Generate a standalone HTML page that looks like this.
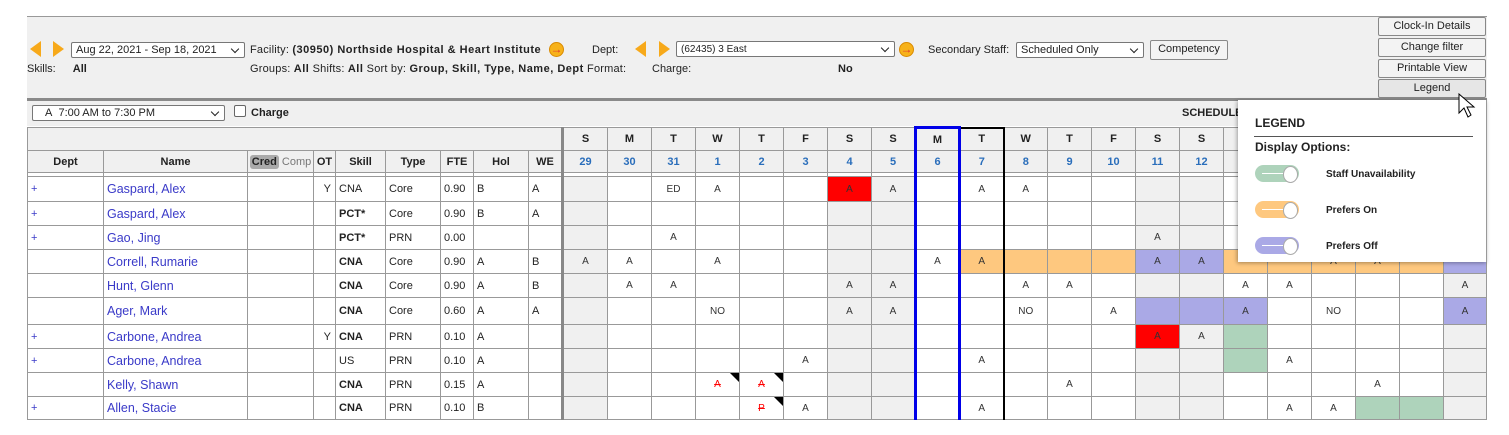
<!DOCTYPE html>
<html><head><meta charset="utf-8"><style>
*{box-sizing:border-box}
body{margin:0;width:1509px;height:435px;background:#fff;font-family:"Liberation Sans",sans-serif;font-size:11px;color:#222;position:relative;overflow:hidden}
.abs{position:absolute;white-space:nowrap}
.panel{position:absolute;left:27px;top:16px;width:1460px;height:83px;background:#f0f0f0;border-top:1px solid #999}
.bar{position:absolute;left:27px;top:98px;width:1460px;height:3px;background:#8a8a8a}
.panel2{position:absolute;left:27px;top:101px;width:1460px;height:25px;background:#f0f0f0}
.sel{position:absolute;background:#fff;border:1px solid #777;border-radius:2px;height:16px;font-size:11px;padding:1px 4px;line-height:13px}
.sel:after{content:"";position:absolute;right:6px;top:3px;width:5px;height:5px;border-right:1.5px solid #222;border-bottom:1.5px solid #222;transform:rotate(45deg)}
.btn{position:absolute;background:#f3f3f3;border:1px solid #888;border-radius:2px;font-size:11px;text-align:center;line-height:17px}
.tri{position:absolute;width:0;height:0}
.go{position:absolute;width:15px;height:15px;border-radius:50%;background:#f7b21a;border:1px solid #d98a00;color:#d33;font-size:12px;line-height:12px;text-align:center;font-weight:bold}
.hb b{letter-spacing:0.5px}
table{position:absolute;left:27px;top:126px;border-collapse:collapse;table-layout:fixed}
td{border:1px solid #999;padding:0 3px;font-size:11px;overflow:hidden;white-space:nowrap}
.h td{background:#f0f0f0;font-weight:bold;text-align:center;height:23px}
.h2 td{height:22px}
.num{color:#2a6ebb}
.gap td{height:4px;background:#fff;padding:0}
.r td.d{text-align:center;font-size:10px;color:#333}
.nm{color:#3a3ac8;font-family:"Liberation Sans Narrow","Liberation Sans",sans-serif;font-size:12.5px}
.pl{color:#3a3ac8}
.w{background:#f0f0f0}.o{background:#fec87f}.p{background:#aaa9e6}.rd{background:#f00}.g{background:#aed3bb}
.bl{border-left:3px solid #0000e8!important;border-right:3px solid #0000e8!important}
.bk{border-right:2px solid #000!important}
.th{position:relative}
.th:after{content:"";position:absolute;right:0;top:0;border-top:9px solid #000;border-left:9px solid transparent}
.rs{color:#f00;text-decoration:line-through}
.b{font-weight:bold}
.leg{position:absolute;left:1238px;top:100px;width:249px;height:162px;background:#fff;box-shadow:-1px 1px 4px rgba(0,0,0,.35);border-right:1px solid #999}
.tog{position:absolute;width:44px;height:17px;border-radius:9px}
.tog:before{content:"";position:absolute;left:7px;top:8px;width:24px;height:1px;background:#fff}
.tog:after{content:"";position:absolute;right:1px;top:1px;width:13px;height:15px;border-radius:50%;background:#fff;border:1px solid #aaa}
.ll{position:absolute;left:88px;font-weight:bold;font-size:10px}
</style></head><body>
<div class="panel"></div>
<div class="bar"></div>
<div class="panel2"></div>

<div class="tri" style="left:30px;top:41px;border-right:11px solid #f7a91a;border-top:8px solid transparent;border-bottom:8px solid transparent"></div>
<div class="tri" style="left:53px;top:41px;border-left:11px solid #f7a91a;border-top:8px solid transparent;border-bottom:8px solid transparent"></div>
<div class="sel" style="left:71px;top:42px;width:174px">Aug 22, 2021 - Sep 18, 2021</div>
<div class="abs hb" style="left:250px;top:44px;letter-spacing:0.2px">Facility: <b>(30950) Northside Hospital &amp; Heart Institute</b></div>
<div class="go" style="left:549px;top:42px">→</div>
<div class="abs" style="left:592px;top:44px">Dept:</div>
<div class="tri" style="left:635px;top:41px;border-right:11px solid #f7a91a;border-top:8px solid transparent;border-bottom:8px solid transparent"></div>
<div class="tri" style="left:659px;top:41px;border-left:11px solid #f7a91a;border-top:8px solid transparent;border-bottom:8px solid transparent"></div>
<div class="sel" style="left:676px;top:41px;width:219px;font-size:10px">(62435) 3 East</div>
<div class="go" style="left:899px;top:42px">→</div>
<div class="abs" style="left:928px;top:44px">Secondary Staff:</div>
<div class="sel" style="left:1016px;top:42px;width:128px">Scheduled Only</div>
<div class="btn" style="left:1150px;top:40px;width:78px;height:20px">Competency</div>
<div class="abs" style="left:27px;top:63px">Skills: <b style="margin-left:14px">All</b></div>
<div class="abs hb" style="left:250px;top:63px;letter-spacing:0.2px">Groups: <b>All</b> Shifts: <b>All</b> Sort by: <b>Group, Skill, Type, Name, Dept</b> Format:</div>
<div class="abs" style="left:652px;top:63px">Charge:</div>
<div class="abs" style="left:838px;top:63px"><b>No</b></div>

<div class="btn" style="left:1378px;top:17px;width:108px;height:19px">Clock-In Details</div>
<div class="btn" style="left:1378px;top:38px;width:108px;height:19px">Change filter</div>
<div class="btn" style="left:1378px;top:59px;width:108px;height:19px">Printable View</div>
<div class="btn" style="left:1378px;top:79px;width:108px;height:19px;background:#e6e6e6">Legend</div>

<div class="sel" style="left:32px;top:105px;width:193px;padding-left:12px">A&nbsp; 7:00 AM to 7:30 PM</div>
<div class="abs" style="left:234px;top:105px;width:12px;height:12px;border:1px solid #666;border-radius:2px;background:#fff"></div>
<div class="abs" style="left:251px;top:107px"><b>Charge</b></div>
<div class="abs" style="left:1182px;top:107px"><b>SCHEDULE</b></div>

<table>
<colgroup><col style="width:76px"><col style="width:144px"><col style="width:66px"><col style="width:22px"><col style="width:50px"><col style="width:55px"><col style="width:33px"><col style="width:55px"><col style="width:34px">
<col style="width:45px"><col style="width:44px"><col style="width:44px"><col style="width:44px"><col style="width:44px"><col style="width:44px"><col style="width:44px"><col style="width:44px"><col style="width:44px"><col style="width:44px"><col style="width:44px"><col style="width:44px"><col style="width:44px"><col style="width:44px"><col style="width:44px"><col style="width:44px"><col style="width:44px"><col style="width:44px"><col style="width:44px"><col style="width:44px"><col style="width:43px"></colgroup>
<tr class="h"><td colspan="9" style="border-right:3px solid #888"></td><td>S</td><td>M</td><td>T</td><td>W</td><td>T</td><td>F</td><td>S</td><td>S</td><td class="bl" style="border-top:3px solid #0000e8">M</td><td class="bk" style="border-top:2px solid #000">T</td><td>W</td><td>T</td><td>F</td><td>S</td><td>S</td><td>M</td><td>T</td><td>W</td><td>T</td><td>F</td><td>S</td></tr>
<tr class="h h2"><td>Dept</td><td>Name</td><td style="padding:0 1px"><span style="background:#aaa;border-radius:3px;padding:1px 2px">Cred</span><span style="color:#777;font-weight:normal"> Comp</span></td><td style="padding:0">OT</td><td>Skill</td><td>Type</td><td>FTE</td><td>Hol</td><td style="border-right:3px solid #888">WE</td><td class="num">29</td><td class="num">30</td><td class="num">31</td><td class="num">1</td><td class="num">2</td><td class="num">3</td><td class="num">4</td><td class="num">5</td><td class="num bl">6</td><td class="num bk">7</td><td class="num">8</td><td class="num">9</td><td class="num">10</td><td class="num">11</td><td class="num">12</td><td class="num">13</td><td class="num">14</td><td class="num">15</td><td class="num">16</td><td class="num">17</td><td class="num">18</td></tr>
<tr class="gap"><td></td><td></td><td></td><td></td><td></td><td></td><td></td><td></td><td style="border-right:3px solid #888"></td><td></td><td></td><td></td><td></td><td></td><td></td><td></td><td></td><td class="bl"></td><td class="bk"></td><td></td><td></td><td></td><td></td><td></td><td></td><td></td><td></td><td></td><td></td><td></td></tr>

<tr class="r" style="height:25px"><td class="pl">+</td><td class="nm">Gaspard, Alex</td><td></td><td style="text-align:right;padding:0 4px">Y</td><td>CNA</td><td>Core</td><td>0.90</td><td>B</td><td style="border-right:3px solid #888">A</td>
<td class="d w"></td><td class="d"></td><td class="d">ED</td><td class="d">A</td><td class="d"></td><td class="d"></td><td class="d rd">A</td><td class="d w">A</td><td class="d bl"></td><td class="d bk">A</td><td class="d">A</td><td class="d"></td><td class="d"></td><td class="d w"></td><td class="d w"></td><td class="d"></td><td class="d"></td><td class="d"></td><td class="d"></td><td class="d"></td><td class="d w"></td></tr>

<tr class="r" style="height:24px"><td class="pl">+</td><td class="nm">Gaspard, Alex</td><td></td><td></td><td class="b">PCT*</td><td>Core</td><td>0.90</td><td>B</td><td style="border-right:3px solid #888">A</td>
<td class="d w"></td><td class="d"></td><td class="d"></td><td class="d"></td><td class="d"></td><td class="d"></td><td class="d w"></td><td class="d w"></td><td class="d bl"></td><td class="d bk"></td><td class="d"></td><td class="d"></td><td class="d"></td><td class="d w"></td><td class="d w"></td><td class="d"></td><td class="d"></td><td class="d"></td><td class="d"></td><td class="d"></td><td class="d w"></td></tr>

<tr class="r" style="height:24px"><td class="pl">+</td><td class="nm">Gao, Jing</td><td></td><td></td><td class="b">PCT*</td><td>PRN</td><td>0.00</td><td></td><td style="border-right:3px solid #888"></td>
<td class="d w"></td><td class="d"></td><td class="d">A</td><td class="d"></td><td class="d"></td><td class="d"></td><td class="d w"></td><td class="d w"></td><td class="d bl"></td><td class="d bk"></td><td class="d"></td><td class="d"></td><td class="d"></td><td class="d w">A</td><td class="d w"></td><td class="d"></td><td class="d"></td><td class="d"></td><td class="d"></td><td class="d"></td><td class="d w"></td></tr>

<tr class="r" style="height:24px"><td></td><td class="nm">Correll, Rumarie</td><td></td><td></td><td class="b">CNA</td><td>Core</td><td>0.90</td><td>A</td><td style="border-right:3px solid #888">B</td>
<td class="d w">A</td><td class="d">A</td><td class="d"></td><td class="d">A</td><td class="d"></td><td class="d"></td><td class="d w"></td><td class="d w"></td><td class="d bl">A</td><td class="d bk o">A</td><td class="d o"></td><td class="d o"></td><td class="d o"></td><td class="d p">A</td><td class="d p">A</td><td class="d o"></td><td class="d o"></td><td class="d o">A</td><td class="d o">A</td><td class="d o"></td><td class="d p"></td></tr>

<tr class="r" style="height:24px"><td></td><td class="nm">Hunt, Glenn</td><td></td><td></td><td class="b">CNA</td><td>Core</td><td>0.90</td><td>A</td><td style="border-right:3px solid #888">B</td>
<td class="d w"></td><td class="d">A</td><td class="d">A</td><td class="d"></td><td class="d"></td><td class="d"></td><td class="d w">A</td><td class="d w">A</td><td class="d bl"></td><td class="d bk"></td><td class="d">A</td><td class="d">A</td><td class="d"></td><td class="d w"></td><td class="d w"></td><td class="d">A</td><td class="d">A</td><td class="d"></td><td class="d"></td><td class="d"></td><td class="d w">A</td></tr>

<tr class="r" style="height:27px"><td></td><td class="nm">Ager, Mark</td><td></td><td></td><td class="b">CNA</td><td>Core</td><td>0.60</td><td>A</td><td style="border-right:3px solid #888">A</td>
<td class="d w"></td><td class="d"></td><td class="d"></td><td class="d">NO</td><td class="d"></td><td class="d"></td><td class="d w">A</td><td class="d w">A</td><td class="d bl"></td><td class="d bk"></td><td class="d">NO</td><td class="d"></td><td class="d">A</td><td class="d p"></td><td class="d p"></td><td class="d p">A</td><td class="d"></td><td class="d">NO</td><td class="d"></td><td class="d"></td><td class="d p">A</td></tr>

<tr class="r" style="height:24px"><td class="pl">+</td><td class="nm">Carbone, Andrea</td><td></td><td style="text-align:right;padding:0 4px">Y</td><td class="b">CNA</td><td>PRN</td><td>0.10</td><td>A</td><td style="border-right:3px solid #888"></td>
<td class="d w"></td><td class="d"></td><td class="d"></td><td class="d"></td><td class="d"></td><td class="d"></td><td class="d w"></td><td class="d w"></td><td class="d bl"></td><td class="d bk"></td><td class="d"></td><td class="d"></td><td class="d"></td><td class="d rd">A</td><td class="d w">A</td><td class="d g"></td><td class="d"></td><td class="d"></td><td class="d"></td><td class="d"></td><td class="d w"></td></tr>

<tr class="r" style="height:24px"><td class="pl">+</td><td class="nm">Carbone, Andrea</td><td></td><td></td><td>US</td><td>PRN</td><td>0.10</td><td>A</td><td style="border-right:3px solid #888"></td>
<td class="d w"></td><td class="d"></td><td class="d"></td><td class="d"></td><td class="d"></td><td class="d">A</td><td class="d w"></td><td class="d w"></td><td class="d bl"></td><td class="d bk">A</td><td class="d"></td><td class="d"></td><td class="d"></td><td class="d w"></td><td class="d w"></td><td class="d g"></td><td class="d">A</td><td class="d"></td><td class="d"></td><td class="d"></td><td class="d w"></td></tr>

<tr class="r" style="height:24px"><td></td><td class="nm">Kelly, Shawn</td><td></td><td></td><td class="b">CNA</td><td>PRN</td><td>0.15</td><td>A</td><td style="border-right:3px solid #888"></td>
<td class="d w"></td><td class="d"></td><td class="d"></td><td class="d th"><span class="rs">A</span></td><td class="d th"><span class="rs">A</span></td><td class="d"></td><td class="d w"></td><td class="d w"></td><td class="d bl"></td><td class="d bk"></td><td class="d"></td><td class="d">A</td><td class="d"></td><td class="d w"></td><td class="d w"></td><td class="d"></td><td class="d"></td><td class="d"></td><td class="d">A</td><td class="d"></td><td class="d w"></td></tr>

<tr class="r" style="height:23px"><td class="pl">+</td><td class="nm">Allen, Stacie</td><td></td><td></td><td class="b">CNA</td><td>PRN</td><td>0.10</td><td>B</td><td style="border-right:3px solid #888"></td>
<td class="d w"></td><td class="d"></td><td class="d"></td><td class="d"></td><td class="d th"><span class="rs">P</span></td><td class="d">A</td><td class="d w"></td><td class="d w"></td><td class="d bl"></td><td class="d bk">A</td><td class="d"></td><td class="d"></td><td class="d"></td><td class="d w"></td><td class="d w"></td><td class="d"></td><td class="d">A</td><td class="d">A</td><td class="d g"></td><td class="d g"></td><td class="d w"></td></tr>
</table>

<div class="leg">
<div class="abs" style="left:17px;top:16px;font-weight:bold;font-size:12px;color:#222">LEGEND</div>
<div class="abs" style="left:16px;top:36px;width:219px;height:1px;background:#555"></div>
<div class="abs" style="left:17px;top:40px;font-weight:bold;font-size:12px;color:#222">Display Options:</div>
<div class="tog" style="left:17px;top:65px;background:#aed3bb"></div><div class="ll" style="top:69px">Staff Unavailability</div>
<div class="tog" style="left:17px;top:101px;background:#fec87f"></div><div class="ll" style="top:105px">Prefers On</div>
<div class="tog" style="left:17px;top:137px;background:#aaa9e6"></div><div class="ll" style="top:141px">Prefers Off</div>
</div>
<svg class="abs" style="left:1458px;top:93px" width="20" height="28" viewBox="0 0 20 28"><path d="M1 1 L1 20 L6 15 L10 24 L13 22 L9 14 L16 14 Z" fill="#fff" stroke="#000" stroke-width="1"/></svg>
</body></html>
